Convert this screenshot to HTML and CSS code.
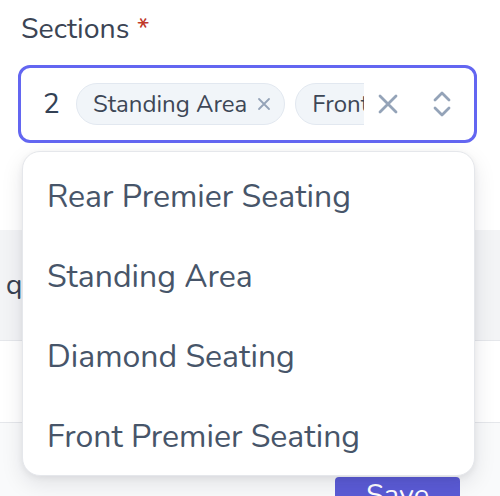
FILE: index.html
```html
<!DOCTYPE html>
<html>
<head>
<meta charset="utf-8">
<link rel="stylesheet" href="styles.css">
</head>
<body>
<div class="page">
  <div class="field">
    <label class="label">Sections <span class="req">*</span></label>
    <div class="select">
      <span class="count">2</span>
      <div class="values">
        <span class="chip">Standing Area
          <svg class="chip-x" width="14" height="14" viewBox="0 0 14 14"><path d="M2 2L12 12M12 2L2 12" stroke="#94a3b8" stroke-width="1.8" stroke-linecap="round"/></svg>
        </span>
        <span class="chip">Front Premier Seating
          <svg class="chip-x" width="14" height="14" viewBox="0 0 14 14"><path d="M2 2L12 12M12 2L2 12" stroke="#94a3b8" stroke-width="1.8" stroke-linecap="round"/></svg>
        </span>
      </div>
      <svg class="clear" width="20" height="20" viewBox="0 0 20 20"><path d="M2 2L18 18M18 2L2 18" stroke="#94a3b8" stroke-width="2.8" stroke-linecap="round"/></svg>
      <svg class="chevrons" width="20" height="30" viewBox="0 0 20 30"><path d="M3 11L10 4L17 11M3 19L10 26L17 19" fill="none" stroke="#94a3b8" stroke-width="2.8" stroke-linecap="round" stroke-linejoin="round"/></svg>
    </div>
    <ul class="menu">
      <li class="option">Rear Premier Seating</li>
      <li class="option">Standing Area</li>
      <li class="option">Diamond Seating</li>
      <li class="option">Front Premier Seating</li>
    </ul>
  </div>
  <div class="spacer"></div>
  <div class="band"><span class="band-text">q</span></div>
  <div class="row"></div>
  <div class="footer"><button class="save">Save</button></div>
</div>
</body>
</html>
```

FILE: styles.css
```css
html, body {
  margin: 0;
  padding: 0;
  height: 496px;
  overflow: hidden;
  background: #ffffff;
}
.page {
  font-family: "Nunito", Lato, "Open Sans", sans-serif;
  position: relative;
  width: 500px;
}
.field {
  position: relative;
  padding: 11px 0 0 18px;
}
.label {
  display: block;
  font-size: 28.5px;
  line-height: 36px;
  color: #3b4454;
  padding-left: 3px;
}
.req {
  color: #c0392b;
}
.select {
  margin-top: 18px;
  width: 459px;
  height: 78px;
  box-sizing: border-box;
  border: 3px solid #6366f1;
  border-radius: 12px;
  display: flex;
  align-items: center;
  padding: 0 22px 0 22px;
  background: #fff;
}
.count {
  font-size: 28px;
  color: #334155;
  width: 33px;
  flex: none;
}
.values {
  flex: 1;
  min-width: 0;
  display: flex;
  gap: 10px;
  overflow: hidden;
}
.chip {
  flex: none;
  display: inline-flex;
  align-items: center;
  height: 42px;
  box-sizing: border-box;
  padding: 0 13px 0 16px;
  border: 1.5px solid #e2e8f0;
  background: #f1f5f9;
  border-radius: 21px;
  font-size: 24px;
  color: #3d4756;
  white-space: nowrap;
}
.chip-x {
  margin-left: 10px;
}
.clear {
  flex: none;
  margin-left: 14px;
}
.chevrons {
  flex: none;
  margin-left: 34px;
}
.menu {
  position: absolute;
  top: 151px;
  left: 22px;
  width: 453px;
  height: 325px;
  box-sizing: border-box;
  margin: 0;
  padding: 4px 0 0 0;
  list-style: none;
  background: #fff;
  border: 1.5px solid #e5e7eb;
  border-radius: 18px;
  box-shadow: 0 8px 22px rgba(15, 23, 42, 0.10), 0 2px 6px rgba(15, 23, 42, 0.06);
  z-index: 5;
}
.option {
  height: 80px;
  display: flex;
  align-items: center;
  padding-left: 24px;
  font-size: 32px;
  color: #475569;
}
.spacer {
  height: 87px;
}
.band {
  height: 110px;
  background: #f3f4f6;
  border-bottom: 1px solid #e5e7eb;
  display: flex;
  align-items: center;
  padding-left: 6px;
}
.band-text {
  font-size: 28px;
  color: #374151;
}
.row {
  height: 81px;
  border-bottom: 1px solid #e5e7eb;
  background: #fff;
}
.footer {
  height: 73px;
  overflow: hidden;
  background: #f9fafb;
  padding: 54px 0 0 335px;
  box-sizing: border-box;
}
.save {
  display: block;
  width: 125px;
  border: none;
  background: #5b5bd6;
  color: #fff;
  font-family: inherit;
  font-size: 29px;
  line-height: 30px;
  padding: 3px 0 27px 0;
  border-radius: 4px;
}
```
